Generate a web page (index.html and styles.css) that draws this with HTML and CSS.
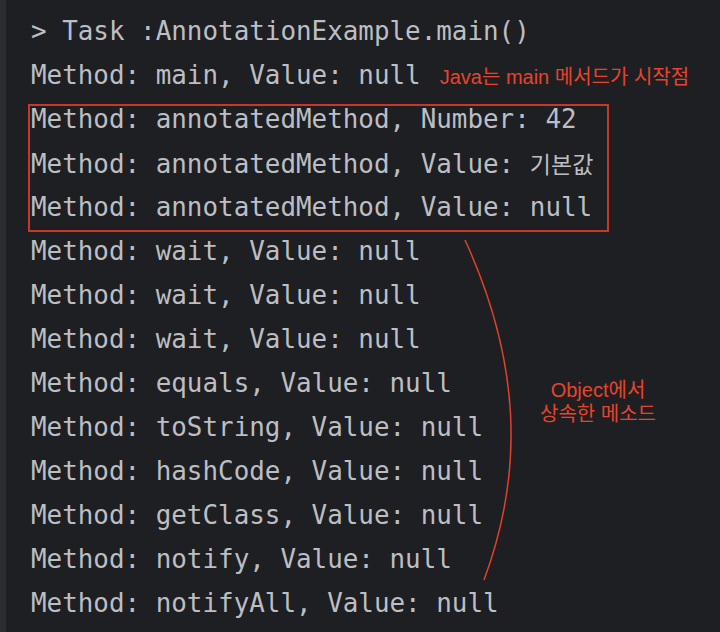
FILE: index.html
```html
<!DOCTYPE html>
<html lang="ko">
<head>
<meta charset="utf-8">
<title>AnnotationExample output</title>
<link rel="stylesheet" href="styles.css">
</head>
<body>
<div class="console">
  <div class="gutter"></div>
  <div class="output">
    <div class="line">&gt; Task :AnnotationExample.main()</div>
    <div class="line">Method: main, Value: null<span class="note note-inline">Java는 main 메서드가 시작점</span></div>
    <div class="line">Method: annotatedMethod, Number: 42</div>
    <div class="line">Method: annotatedMethod, Value: <span class="ko">기본값</span></div>
    <div class="line">Method: annotatedMethod, Value: null</div>
    <div class="line">Method: wait, Value: null</div>
    <div class="line">Method: wait, Value: null</div>
    <div class="line">Method: wait, Value: null</div>
    <div class="line">Method: equals, Value: null</div>
    <div class="line">Method: toString, Value: null</div>
    <div class="line">Method: hashCode, Value: null</div>
    <div class="line">Method: getClass, Value: null</div>
    <div class="line">Method: notify, Value: null</div>
    <div class="line">Method: notifyAll, Value: null</div>
  </div>
  <div class="mark-box"></div>
  <svg class="mark-curve" width="720" height="632" viewBox="0 0 720 632">
    <path d="M465 240 C 520 360, 525 470, 484 580" fill="none" stroke="#e0412b" stroke-width="1.5"/>
  </svg>
  <div class="note note-object">Object에서<br>상속한 메소드</div>
</div>
</body>
</html>
```

FILE: styles.css
```css
html, body {
  margin: 0;
  padding: 0;
  background: #1e1f22;
}

.console {
  position: relative;
  width: 720px;
  height: 632px;
  display: flex;
  overflow: hidden;
  background: #1e1f22;
}

.gutter {
  width: 6px;
  flex: none;
  background: #2b2d30;
}

.output {
  padding: 9px 0 0 25px;
  font-family: "DejaVu Sans Mono", "Noto Sans CJK KR", monospace;
  font-size: 25.9px;
  line-height: 44px;
  color: #bcbec4;
}

.line {
  height: 44px;
  white-space: pre;
}

.ko {
  font-family: "Noto Sans CJK KR", sans-serif;
  font-size: 23px;
}

.note {
  font-family: "Liberation Sans", "Noto Sans CJK KR", sans-serif;
  color: #e8432c;
  font-size: 20px;
  white-space: nowrap;
}

.note-inline {
  margin-left: 19px;
}

.mark-box {
  position: absolute;
  left: 28px;
  top: 104px;
  width: 577px;
  height: 124px;
  border: 2px solid #c5382a;
}

.mark-curve {
  position: absolute;
  left: 0;
  top: 0;
  pointer-events: none;
}

.note-object {
  position: absolute;
  left: 532px;
  top: 378px;
  width: 132px;
  text-align: center;
  line-height: 24px;
}
```
